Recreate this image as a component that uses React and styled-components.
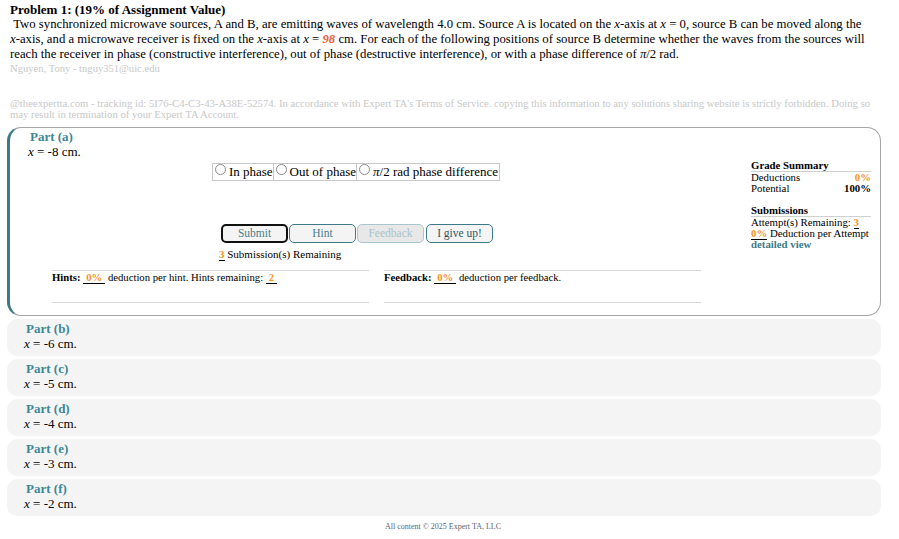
import React from "react";
import styled, { createGlobalStyle } from "styled-components";

const Global = createGlobalStyle`
  body {
    margin: 0;
    background: #fff;
    font-family: "Liberation Serif", "Times New Roman", serif;
    color: #000;
  }
`;

const Page = styled.div`
  width: 874px;
  padding: 2px 0 0 7px;
`;

const Header = styled.div`
  padding-left: 3px;
`;

const Title = styled.div`
  font-weight: bold;
  font-size: 13px;
  line-height: 15px;
`;

const Statement = styled.div`
  font-size: 12.75px;
  line-height: 15px;
  padding-right: 2px;
`;

const NoBreak = styled.span`
  white-space: nowrap;
`;

const Value = styled.span`
  color: #f15a3a;
  font-style: italic;
  font-weight: bold;
`;

const Email = styled.div`
  color: #c8c8c8;
  font-size: 10.6px;
  line-height: 14px;
`;

const Notice = styled.div`
  color: #c8c8c8;
  font-size: 10.7px;
  line-height: 11px;
  margin-top: 22px;
`;

const Active = styled.div`
  margin-top: 7px;
  border: 1px solid #a6a6a6;
  border-left: 3px solid #3b7a86;
  border-radius: 14px;
  height: 187px;
  display: flex;
  flex-direction: column;
`;

const Label = styled.div`
  color: #3d8795;
  font-weight: bold;
  font-size: 13px;
  line-height: 14px;
  padding-left: ${(p) => p.$indent}px;
  margin-top: ${(p) => p.$top || 0}px;
`;

const Given = styled.div`
  font-size: 13px;
  line-height: 15px;
  padding-left: ${(p) => p.$indent}px;
`;

const Body = styled.div`
  display: flex;
`;

const Main = styled.div`
  width: 692px;
  display: flex;
  flex-direction: column;
  align-items: center;
`;

const Choices = styled.table`
  border-collapse: collapse;
  margin-top: 4px;
  font-size: 13px;
  td {
    border: 1px solid #c8c8c8;
    padding: 0 0 0 2px;
    line-height: 16px;
    white-space: nowrap;
  }
`;

const Radio = styled.span`
  display: inline-block;
  width: 9px;
  height: 9px;
  border: 1px solid #8a8a8a;
  border-radius: 50%;
  margin-right: 3px;
  vertical-align: 1px;
`;

const Controls = styled.div`
  margin-top: 43px;
  display: flex;
  flex-direction: column;
  margin-left: 2px;
`;

const Buttons = styled.div`
  display: flex;
  gap: 1px;
`;

const Button = styled.div`
  width: ${(p) => (p.$primary ? 63 : 65)}px;
  height: ${(p) => (p.$primary ? 15 : 17)}px;
  border: ${(p) => (p.$primary ? "2px solid #111" : `1px solid ${p.$off ? "#a9c6cc" : "#3b7a86"}`)};
  border-radius: 5px;
  background: ${(p) => (p.$off ? "#e8e8e8" : "#f4f4f4")};
  color: ${(p) => (p.$off ? "#a9c3c9" : p.$dark ? "#2d5863" : "#4a7f8c")};
  font-size: 11.5px;
  line-height: ${(p) => (p.$primary ? 15 : 17)}px;
  text-align: center;
  margin-left: ${(p) => p.$gap || 0}px;
`;

const Remaining = styled.div`
  font-size: 11px;
  line-height: 14px;
  margin-top: 4px;
  margin-left: -2px;
`;

const Orange = styled.span`
  color: #f7941d;
  font-weight: bold;
  border-bottom: ${(p) => (p.$line ? "1px solid #000" : "none")};
  padding: ${(p) => (p.$pad ? "0 3px" : "0")};
`;

const Notes = styled.div`
  margin-top: 9px;
  align-self: stretch;
  display: flex;
  gap: 15px;
  padding-left: 42px;
`;

const Note = styled.div`
  width: 317px;
  height: 33px;
  box-sizing: border-box;
  border-top: 1px solid #d8d8d8;
  border-bottom: 1px solid #d8d8d8;
  font-size: 10.7px;
  line-height: 13px;
`;

const Summary = styled.div`
  margin-left: 49px;
  margin-top: 1px;
  width: 122px;
  font-size: 10.8px;
  line-height: 11px;
  white-space: nowrap;
`;

const SummaryHead = styled.div`
  font-weight: bold;
  border-bottom: 1px solid #d0d0d0;
  margin-top: ${(p) => p.$top || 0}px;
  margin-right: 2px;
`;

const SummaryRow = styled.div`
  display: flex;
  justify-content: space-between;
  margin-right: 2px;
`;

const Strong = styled.span`
  font-weight: bold;
`;

const TealLink = styled.div`
  color: #3d7c88;
  font-weight: bold;
`;

const Collapsed = styled.div`
  margin-top: 3px;
  background: #f4f4f4;
  border-radius: 10px;
  height: 37px;
  padding-top: 3px;
  box-sizing: border-box;
`;

const Footer = styled.div`
  text-align: center;
  font-size: 8px;
  color: #5d6673;
  margin-top: 6px;
  padding-right: 2px;
`;

const others = [
  ["b", "-6"],
  ["c", "-5"],
  ["d", "-4"],
  ["e", "-3"],
  ["f", "-2"],
];

const Axis = () => (
  <NoBreak>
    <i>x</i>-axis
  </NoBreak>
);

export default function App() {
  return (
    <Page>
      <Global />
      <Header>
        <Title>Problem 1: (19% of Assignment Value)</Title>
        <Statement>
          &nbsp;Two synchronized microwave sources, A and B, are emitting waves of wavelength 4.0 cm. Source A is located on the <Axis /> at <i>x</i> = 0, source B can be moved along the <Axis />, and a microwave receiver is fixed on the <Axis /> at <i>x</i> = <Value>98</Value> cm. For each of the following positions of source B determine whether the waves from the sources will reach the receiver in phase (constructive interference), out of phase (destructive interference), or with a phase difference of <i>π</i>/2 rad.
        </Statement>
        <Email>Nguyen, Tony - tnguy351@uic.edu</Email>
        <Notice>
          @theexpertta.com - tracking id: 5I76-C4-C3-43-A38E-52574. In accordance with Expert TA's Terms of Service. copying this information to any solutions sharing website is strictly forbidden. Doing so may result in termination of your Expert TA Account.
        </Notice>
      </Header>

      <Active>
        <Label $indent={20} $top={2}>Part (a)</Label>
        <Given $indent={18}><i>x</i> = -8 cm.</Given>
        <Body>
          <Main>
            <Choices>
              <tbody>
                <tr>
                  <td><Radio />In phase</td>
                  <td><Radio />Out of phase</td>
                  <td style={{ paddingRight: 1 }}><Radio /><i>π</i>/2 rad phase difference</td>
                </tr>
              </tbody>
            </Choices>
            <Controls>
              <Buttons>
                <Button $primary>Submit</Button>
                <Button>Hint</Button>
                <Button $off>Feedback</Button>
                <Button $dark $gap={1}>I give up!</Button>
              </Buttons>
              <Remaining>
                <Orange $line>3</Orange> Submission(s) Remaining
              </Remaining>
            </Controls>
            <Notes>
              <Note>
                <b>Hints:</b> <Orange $line $pad>0%</Orange> deduction per hint. Hints remaining: <Orange $line $pad>2</Orange>
              </Note>
              <Note>
                <b>Feedback:</b> <Orange $line $pad>0%</Orange> deduction per feedback.
              </Note>
            </Notes>
          </Main>
          <Summary>
            <SummaryHead>Grade Summary</SummaryHead>
            <SummaryRow>
              <span>Deductions</span>
              <Orange>0%</Orange>
            </SummaryRow>
            <SummaryRow>
              <span>Potential</span>
              <Strong>100%</Strong>
            </SummaryRow>
            <SummaryHead $top={11}>Submissions</SummaryHead>
            <div>
              Attempt(s) Remaining: <Orange $line>3</Orange>
            </div>
            <div>
              <Orange $line>0%</Orange> Deduction per Attempt
            </div>
            <TealLink>detailed view</TealLink>
          </Summary>
        </Body>
      </Active>

      {others.map(([letter, value]) => (
        <Collapsed key={letter}>
          <Label $indent={19}>Part ({letter})</Label>
          <Given $indent={17}><i>x</i> = {value} cm.</Given>
        </Collapsed>
      ))}

      <Footer>All content © 2025 Expert TA, LLC</Footer>
    </Page>
  );
}
